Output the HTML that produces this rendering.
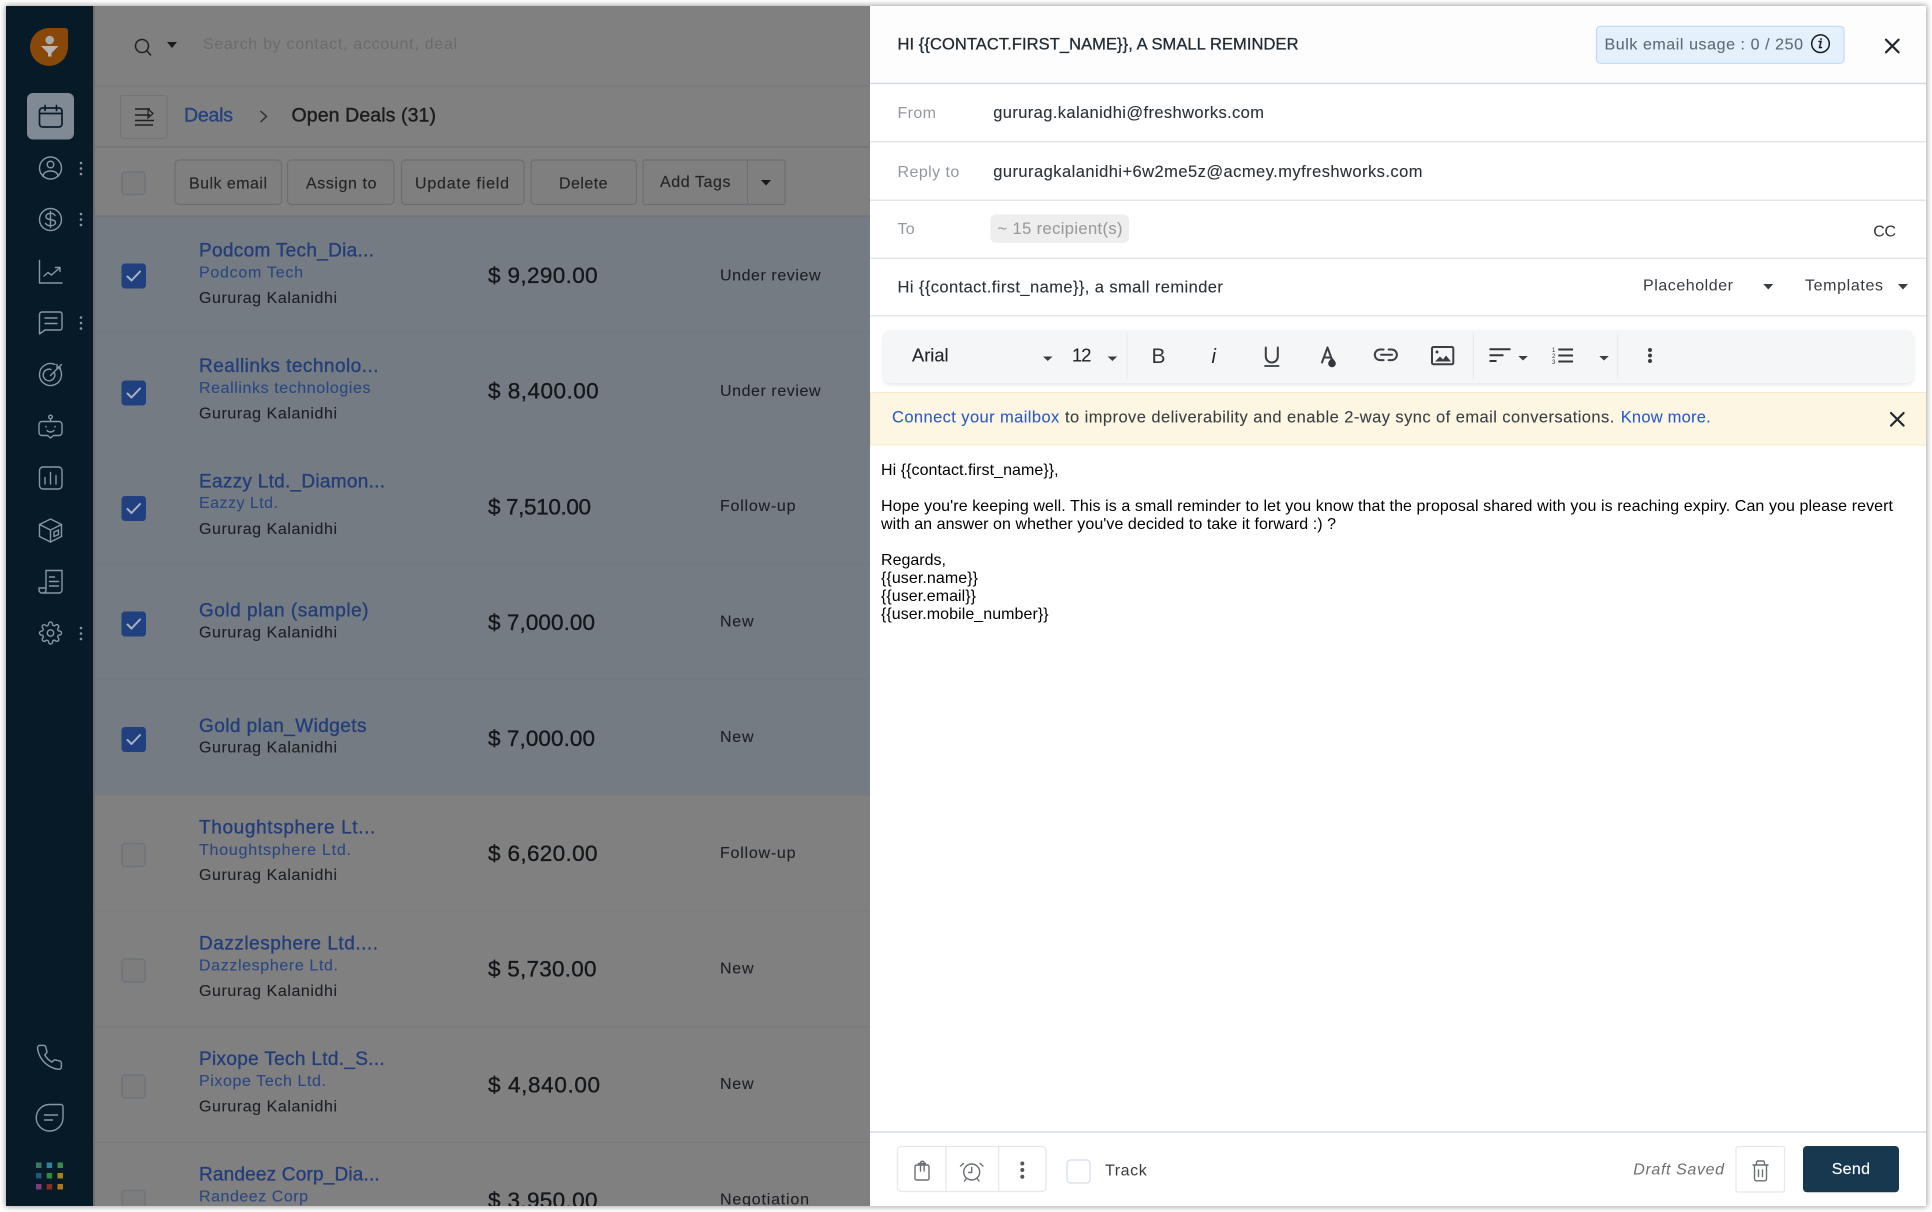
<!DOCTYPE html>
<html lang="en"><head><meta charset="utf-8"><title>Deals</title>
<style>
html,body{margin:0;padding:0;background:#fff;width:1932px;height:1212px;overflow:hidden}
svg{display:block}
text{font-family:"Liberation Sans",Arial,sans-serif;white-space:pre}
.t{font-size:19px;fill:#223d7a;stroke:#223d7a;stroke-width:.35}
.s{font-size:16px;fill:#2b4782;stroke:#2b4782;stroke-width:.1}
.o{font-size:16px;fill:#1c1f23;stroke:#1c1f23;stroke-width:.1}
.a{font-size:22.5px;fill:#14171a;stroke:#14171a;stroke-width:.35}
.st{font-size:16px;fill:#1c1f23;stroke:#1c1f23;stroke-width:.1}
.b{font-size:16px;fill:#232527;stroke:#232527;stroke-width:.15}
.l{font-size:16px;fill:#93989d}
.v{font-size:16.5px;fill:#2b3238;stroke:#2b3238;stroke-width:.12}
.ed{font-size:16px;fill:#000}
.ic{fill:none;stroke:#8797a4;stroke-width:1.4;stroke-linecap:round;stroke-linejoin:round}
.dk{fill:none;stroke:#3a3f44;stroke-width:2;stroke-linecap:round;stroke-linejoin:round}
.gy{fill:none;stroke:#6a6f74;stroke-width:1.4;stroke-linecap:round;stroke-linejoin:round}
.cb{fill:#21407f;stroke:#21407f}
.ub{fill:#7d7d7d;stroke:#6d747d;stroke-width:1.5}
.ck{fill:none;stroke:#a9b3c4;stroke-width:2;stroke-linecap:round;stroke-linejoin:round}
.dv{stroke:#7a7a7a;stroke-width:1}
.dvs{stroke:#70777e;stroke-width:1}
.hl{stroke:#e3e6e9;stroke-width:1.5}
</style></head><body>
<svg xmlns="http://www.w3.org/2000/svg" width="1932" height="1212" viewBox="0 0 1932 1212">
<defs>
<filter id="sh" x="-2%" y="-2%" width="104%" height="104%"><feGaussianBlur stdDeviation="3"/></filter>
<filter id="tb" x="-2%" y="-20%" width="104%" height="150%"><feDropShadow dx="0" dy="2" stdDeviation="2" flood-color="#000" flood-opacity=".1"/></filter>
<clipPath id="fr"><rect x="6" y="6" width="1920" height="1200"/></clipPath>
</defs>
<rect x="5" y="5" width="1922" height="1202" fill="#000" opacity=".35" filter="url(#sh)"/>
<g clip-path="url(#fr)">
<rect x="6" y="6" width="1920" height="1200" fill="#808080"/>

<!-- main left area -->
<rect x="93" y="216" width="777" height="579" fill="#747b82"/>
<line x1="93" y1="86" x2="870" y2="86" stroke="#767676"/>
<line x1="93" y1="147" x2="870" y2="147" stroke="#6e6e6e"/>
<line x1="93" y1="216" x2="870" y2="216" stroke="#707070"/>
<line class="dvs" x1="93" y1="332" x2="870" y2="332"/>
<line class="dvs" x1="93" y1="448" x2="870" y2="448"/>
<line class="dvs" x1="93" y1="563.5" x2="870" y2="563.5"/>
<line class="dvs" x1="93" y1="679" x2="870" y2="679"/>
<line class="dv" x1="93" y1="795" x2="870" y2="795"/>
<line class="dv" x1="93" y1="911" x2="870" y2="911"/>
<line class="dv" x1="93" y1="1027" x2="870" y2="1027"/>
<line class="dv" x1="93" y1="1142.5" x2="870" y2="1142.5"/>

<!-- search -->
<circle cx="142" cy="46" r="6.5" fill="none" stroke="#1f1f1f" stroke-width="1.5"/>
<line x1="147" y1="51" x2="151" y2="55.5" stroke="#1f1f1f" stroke-width="1.5"/>
<path d="M167 42h10l-5 6z" fill="#1a1a1a"/>
<text x="203" y="49" font-size="16" fill="#6b6b6b" textLength="254" lengthAdjust="spacing">Search by contact, account, deal</text>

<!-- breadcrumb -->
<rect x="120.5" y="95.5" width="46.5" height="43" rx="2" fill="#808080" stroke="#747474"/>
<path d="M135 109h15M135 115h15M135 120.500h19M135 125h18" stroke="#1f1f1f" stroke-width="1.4" fill="none"/>
<path d="M148 109l5 4.500l-5 4.500z" fill="none" stroke="#1f1f1f" stroke-width="1.2"/>
<text x="184" y="121.500" font-size="19.500" fill="#24437f" stroke="#24437f" stroke-width=".4" textLength="49" lengthAdjust="spacing">Deals</text>
<path d="M260.500 111l6 5.500l-6 5.500" fill="none" stroke="#2a2a2a" stroke-width="1.300"/>
<text x="291.500" y="121.500" font-size="19.500" fill="#1c1c1c" stroke="#1c1c1c" stroke-width=".4" textLength="144.500" lengthAdjust="spacing">Open Deals (31)</text>

<!-- actions -->
<rect class="ub" x="122" y="172" width="23" height="22.500" rx="3"/>
<g fill="#7f7f7f" stroke="#6b6f73" stroke-width="1.200">
<rect x="175" y="160" width="106.500" height="44.500" rx="4"/>
<rect x="287.500" y="160" width="106.500" height="44.500" rx="4"/>
<rect x="401.500" y="160" width="122.500" height="44.500" rx="4"/>
<rect x="531" y="160" width="105.500" height="44.500" rx="4"/>
<rect x="643" y="160" width="142" height="44.500" rx="2"/>
</g>
<line x1="747.500" y1="160" x2="747.500" y2="204.500" stroke="#6b6f73"/>
<path d="M761 180h10l-5 5.500z" fill="#1a1a1a"/>
<text class="b" x="189" y="188.500" textLength="78" lengthAdjust="spacing">Bulk email</text>
<text class="b" x="306" y="188.500" textLength="70.500" lengthAdjust="spacing">Assign to</text>
<text class="b" x="415" y="188.500" textLength="94" lengthAdjust="spacing">Update field</text>
<text class="b" x="559" y="188.500" textLength="48.500" lengthAdjust="spacing">Delete</text>
<text class="b" x="660" y="187" textLength="70.500" lengthAdjust="spacing">Add Tags</text>

<!-- checkboxes -->
<g>
<rect class="cb" x="122" y="264" width="23.500" height="24" rx="3"/><path class="ck" d="M127.500 276.500l4 4l8.500-9"/>
<rect class="cb" x="122" y="381" width="23.500" height="24" rx="3"/><path class="ck" d="M127.500 393.500l4 4l8.500-9"/>
<rect class="cb" x="122" y="496.500" width="23.500" height="24" rx="3"/><path class="ck" d="M127.500 509l4 4l8.500-9"/>
<rect class="cb" x="122" y="612" width="23.500" height="24" rx="3"/><path class="ck" d="M127.500 624.500l4 4l8.500-9"/>
<rect class="cb" x="122" y="727.500" width="23.500" height="24" rx="3"/><path class="ck" d="M127.500 740l4 4l8.500-9"/>
<rect class="ub" x="122" y="843.500" width="23" height="23" rx="3"/>
<rect class="ub" x="122" y="959" width="23" height="23" rx="3"/>
<rect class="ub" x="122" y="1075" width="23" height="23" rx="3"/>
<rect class="ub" x="122" y="1190.500" width="23" height="23" rx="3"/>
</g>

<!-- rows -->
<text class="t" x="199" y="256.500" textLength="175" lengthAdjust="spacing">Podcom Tech_Dia...</text>
<text class="s" x="199" y="277.500" textLength="104" lengthAdjust="spacing">Podcom Tech</text>
<text class="o" x="199" y="303" textLength="138" lengthAdjust="spacing">Gururag Kalanidhi</text>

<text class="t" x="199" y="372" textLength="179.500" lengthAdjust="spacing">Reallinks technolo...</text>
<text class="s" x="199" y="393" textLength="171.500" lengthAdjust="spacing">Reallinks technologies</text>
<text class="o" x="199" y="418.500" textLength="138" lengthAdjust="spacing">Gururag Kalanidhi</text>

<text class="t" x="199" y="487.500" textLength="186" lengthAdjust="spacing">Eazzy Ltd._Diamon...</text>
<text class="s" x="199" y="508" textLength="79" lengthAdjust="spacing">Eazzy Ltd.</text>
<text class="o" x="199" y="534" textLength="138" lengthAdjust="spacing">Gururag Kalanidhi</text>

<text class="t" x="199" y="616.500" textLength="169.500" lengthAdjust="spacing">Gold plan (sample)</text>
<text class="o" x="199" y="637.300" textLength="138" lengthAdjust="spacing">Gururag Kalanidhi</text>

<text class="t" x="199" y="732" textLength="167.500" lengthAdjust="spacing">Gold plan_Widgets</text>
<text class="o" x="199" y="752.700" textLength="138" lengthAdjust="spacing">Gururag Kalanidhi</text>

<text class="t" x="199" y="833.500" textLength="176.300" lengthAdjust="spacing">Thoughtsphere Lt...</text>
<text class="s" x="199" y="855" textLength="152" lengthAdjust="spacing">Thoughtsphere Ltd.</text>
<text class="o" x="199" y="880" textLength="138" lengthAdjust="spacing">Gururag Kalanidhi</text>

<text class="t" x="199" y="949.500" textLength="179" lengthAdjust="spacing">Dazzlesphere Ltd....</text>
<text class="s" x="199" y="970.700" textLength="139" lengthAdjust="spacing">Dazzlesphere Ltd.</text>
<text class="o" x="199" y="996" textLength="138" lengthAdjust="spacing">Gururag Kalanidhi</text>

<text class="t" x="199" y="1065" textLength="185.700" lengthAdjust="spacing">Pixope Tech Ltd._S...</text>
<text class="s" x="199" y="1086" textLength="127" lengthAdjust="spacing">Pixope Tech Ltd.</text>
<text class="o" x="199" y="1111.700" textLength="138" lengthAdjust="spacing">Gururag Kalanidhi</text>

<text class="t" x="199" y="1180.500" textLength="180.700" lengthAdjust="spacing">Randeez Corp_Dia...</text>
<text class="s" x="199" y="1201.700" textLength="109" lengthAdjust="spacing">Randeez Corp</text>

<!-- amounts -->
<text class="a" x="488" y="283" textLength="109.700" lengthAdjust="spacing">$ 9,290.00</text>
<text class="a" x="488" y="398.700" textLength="110.700" lengthAdjust="spacing">$ 8,400.00</text>
<text class="a" x="488" y="514.400" textLength="103" lengthAdjust="spacing">$ 7,510.00</text>
<text class="a" x="488" y="630" textLength="107" lengthAdjust="spacing">$ 7,000.00</text>
<text class="a" x="488" y="745.800" textLength="107" lengthAdjust="spacing">$ 7,000.00</text>
<text class="a" x="488" y="861" textLength="109.500" lengthAdjust="spacing">$ 6,620.00</text>
<text class="a" x="488" y="976.700" textLength="108.500" lengthAdjust="spacing">$ 5,730.00</text>
<text class="a" x="488" y="1092.500" textLength="112" lengthAdjust="spacing">$ 4,840.00</text>
<text class="a" x="488" y="1208" textLength="109.500" lengthAdjust="spacing">$ 3,950.00</text>

<!-- statuses -->
<text class="st" x="720" y="280.700" textLength="100.500" lengthAdjust="spacing">Under review</text>
<text class="st" x="720" y="396.200" textLength="100.500" lengthAdjust="spacing">Under review</text>
<text class="st" x="720" y="511" textLength="75.500" lengthAdjust="spacing">Follow-up</text>
<text class="st" x="720" y="626.500" textLength="33.500" lengthAdjust="spacing">New</text>
<text class="st" x="720" y="742.200" textLength="33.500" lengthAdjust="spacing">New</text>
<text class="st" x="720" y="858" textLength="75.500" lengthAdjust="spacing">Follow-up</text>
<text class="st" x="720" y="973.500" textLength="33.500" lengthAdjust="spacing">New</text>
<text class="st" x="720" y="1089.200" textLength="33.500" lengthAdjust="spacing">New</text>
<text class="st" x="720" y="1204.500" textLength="89" lengthAdjust="spacing">Negotiation</text>

<!-- sidebar -->
<rect x="93" y="6" width="2" height="1200" fill="#6f6f6f"/>
<rect x="6" y="6" width="87" height="1200" fill="#071a27"/>
<path d="M30 47a19 19 0 0 1 19-19h16a3 3 0 0 1 3 3v16a19 19 0 0 1-38 0z" fill="#87480a"/>
<circle cx="49.700" cy="40" r="4.300" fill="#a9a9a9"/>
<path d="M41 46h17.500l-7 7v3.500h-3.500v-3.500z" fill="#b4b4b4"/>
<rect x="27" y="93" width="47" height="46.500" rx="6" fill="#7f8a94"/>
<g fill="none" stroke="#0b1d2b" stroke-width="1.700" stroke-linecap="round" stroke-linejoin="round">
<rect x="39.500" y="108" width="22.500" height="19" rx="3"/>
<path d="M39.500 113.500h22.500M45 105.500v5M56.500 105.500v5"/>
</g>

<g class="ic">
<!-- contacts -->
<circle cx="50.500" cy="168" r="11"/><circle cx="50.500" cy="164.500" r="3.300"/><path d="M43 176.500c0-3.500 3.200-5.500 7.500-5.500s7.500 2 7.500 5.500"/>
<!-- deals -->
<circle cx="50.500" cy="219.500" r="11"/><path d="M55 215.500c-.8-1.500-2.500-2.200-4.500-2.200c-2.600 0-4.500 1.300-4.500 3.200c0 4.500 9.500 2 9.500 6c0 1.900-2 3.200-5 3.200c-2.200 0-4-.8-5-2.300M50.500 211.500v16"/>
<!-- chart -->
<path d="M39.500 260.500v22.500h22.500"/><path d="M44 276l4-3.500l3.500 2.500l8-7M55.500 267.500h4.500v4"/>
<!-- chat -->
<path d="M42 312h18a2 2 0 0 1 2 2v14a2 2 0 0 1-2 2H45l-5.500 4V314.500a2.500 2.500 0 0 1 2.500-2.500z"/><path d="M45 318h12M45 323.500h12"/>
<!-- target -->
<path d="M58.500 367a11 11 0 1 1-3.500-2.500"/><path d="M54.500 373a5.800 5.800 0 1 1-3.500-3.500"/><path d="M50.500 375.500l9-9M57 364.500v3.500h3.500M59.500 366.500l2-2"/>
<!-- bot -->
<circle cx="50.500" cy="417" r="1.800"/><path d="M50.500 419v2.500"/><path d="M42 421.500h17a3 3 0 0 1 3 3v8a3 3 0 0 1-3 3h-5.500l-3 2.500l-3-2.500H42a3 3 0 0 1-3-3v-8a3 3 0 0 1 3-3z"/><path d="M46 426.500v.5M55 426.500v.5M47 430.500c2 2 5 2 7 0"/>
<!-- reports -->
<rect x="39.500" y="467" width="22.500" height="22" rx="3.500"/><path d="M45 477.500v6.500M50.500 472.500v11.500M56 475.500v8.500"/>
<!-- box -->
<path d="M50.500 519l11 5.500v12l-11 5.500l-11-5.500v-12z"/><path d="M39.500 524.500l11 5.500l11-5.500M50.500 530v12"/><path d="M54 532l4.500-2v4.500l-4.500 2z"/>
<!-- doc -->
<path d="M62 570.500H46v19.500a3 3 0 0 1-3 3h16a3 3 0 0 0 3-3zM46 588h-7v2a3 3 0 0 0 3 3"/><path d="M49.500 577h5M49.500 581.500h9M49.500 586h9"/>
<!-- gear -->
<g transform="translate(38.500,621)"><circle cx="12" cy="12" r="3.200"/><path d="M19.400 15a1.650 1.650 0 0 0 .33 1.820l.06.06a2 2 0 0 1 0 2.830 2 2 0 0 1-2.830 0l-.06-.06a1.650 1.650 0 0 0-1.820-.33 1.650 1.650 0 0 0-1 1.510V21a2 2 0 0 1-2 2 2 2 0 0 1-2-2v-.09A1.650 1.650 0 0 0 9 19.400a1.650 1.650 0 0 0-1.820.33l-.06.06a2 2 0 0 1-2.830 0 2 2 0 0 1 0-2.830l.06-.06a1.650 1.650 0 0 0 .33-1.820 1.650 1.650 0 0 0-1.510-1H3a2 2 0 0 1-2-2 2 2 0 0 1 2-2h.09A1.650 1.650 0 0 0 4.600 9a1.650 1.650 0 0 0-.33-1.820l-.06-.06a2 2 0 0 1 0-2.830 2 2 0 0 1 2.830 0l.06.06a1.650 1.650 0 0 0 1.820.33H9a1.650 1.650 0 0 0 1-1.510V3a2 2 0 0 1 2-2 2 2 0 0 1 2 2v.09a1.650 1.650 0 0 0 1 1.510 1.650 1.650 0 0 0 1.820-.33l.06-.06a2 2 0 0 1 2.830 0 2 2 0 0 1 0 2.830l-.06.06a1.650 1.650 0 0 0-.33 1.820V9a1.650 1.650 0 0 0 1.510 1H21a2 2 0 0 1 2 2 2 2 0 0 1-2 2h-.09a1.650 1.650 0 0 0-1.510 1z"/></g>
<!-- phone -->
<path transform="translate(35,1043) scale(1.2)" stroke-width="1.200" d="M22 16.920v3a2 2 0 0 1-2.180 2 19.790 19.790 0 0 1-8.630-3.070 19.500 19.500 0 0 1-6-6 19.790 19.790 0 0 1-3.070-8.670A2 2 0 0 1 4.110 2h3a2 2 0 0 1 2 1.720 12.840 12.840 0 0 0 .7 2.810 2 2 0 0 1-.45 2.110L8.090 9.910a16 16 0 0 0 6 6l1.270-1.270a2 2 0 0 1 2.110-.45 12.840 12.840 0 0 0 2.810.7A2 2 0 0 1 22 16.920z"/>
<!-- freddy chat -->
<path d="M49.500 1104.500h11.500a2 2 0 0 1 2 2v11.500a13.200 13.200 0 0 1-13.500 13a13.200 13.200 0 0 1 0-26.500z"/><path d="M44.500 1115h13M44.500 1120h8"/>
</g>
<g fill="#8697a4"><circle cx="81" cy="163" r="1.300"/><circle cx="81" cy="168.500" r="1.300"/><circle cx="81" cy="174" r="1.300"/>
<circle cx="81" cy="214" r="1.300"/><circle cx="81" cy="219.500" r="1.300"/><circle cx="81" cy="225" r="1.300"/>
<circle cx="81" cy="317.500" r="1.300"/><circle cx="81" cy="323" r="1.300"/><circle cx="81" cy="328.500" r="1.300"/>
<circle cx="81" cy="628" r="1.300"/><circle cx="81" cy="633.500" r="1.300"/><circle cx="81" cy="639" r="1.300"/></g>
<g>
<rect x="36" y="1162.500" width="5.500" height="5.500" fill="#3b7a5e"/><rect x="46.700" y="1162.500" width="5.500" height="5.500" fill="#2f8496"/><rect x="57.500" y="1162.500" width="5.500" height="5.500" fill="#3c8a4a"/>
<rect x="36" y="1173" width="5.500" height="5.500" fill="#245479"/><rect x="46.700" y="1173" width="5.500" height="5.500" fill="#2f8a3d"/><rect x="57.500" y="1173" width="5.500" height="5.500" fill="#a8801c"/>
<rect x="36" y="1184" width="5.500" height="5.500" fill="#7d3f79"/><rect x="46.700" y="1184" width="5.500" height="5.500" fill="#8c2a24"/><rect x="57.500" y="1184" width="5.500" height="5.500" fill="#a8781a"/>
</g>

<!-- email panel -->
<rect x="870" y="6" width="1056" height="1200" fill="#fff"/>
<rect x="870" y="6" width="1056" height="77" fill="#fdfdfe"/>
<line x1="870" y1="83.500" x2="1926" y2="83.500" stroke="#d4dbe2" stroke-width="1.500"/>
<line class="hl" x1="870" y1="141.700" x2="1926" y2="141.700"/>
<line class="hl" x1="870" y1="200.300" x2="1926" y2="200.300"/>
<line class="hl" x1="870" y1="258.300" x2="1926" y2="258.300"/>
<line class="hl" x1="870" y1="315.700" x2="1926" y2="315.700"/>

<text x="897.500" y="49.500" font-size="16.500" fill="#1f2a33" stroke="#1f2a33" stroke-width=".3" textLength="401" lengthAdjust="spacing">HI {{CONTACT.FIRST_NAME}}, A SMALL REMINDER</text>
<rect x="1596.500" y="26.300" width="247.500" height="37" rx="4" fill="#e4f1fd" stroke="#bcdaf5" stroke-width="1.200"/>
<text x="1604.500" y="49.500" font-size="16" fill="#5f6a73" stroke="#5f6a73" stroke-width=".1" textLength="198.500" lengthAdjust="spacing">Bulk email usage : 0 / 250</text>
<circle cx="1820.500" cy="43.700" r="8.800" fill="none" stroke="#1a1a1a" stroke-width="1.500"/>
<path d="M1819 41.500h2l-1.500 6h2M1821 38.700v.8" fill="none" stroke="#1a1a1a" stroke-width="1.500" stroke-linecap="round"/>
<path d="M1886 39.700l12.600 12.600M1898.600 39.700l-12.600 12.600" stroke="#23282d" stroke-width="2.200" stroke-linecap="round"/>

<text class="l" x="897.500" y="118" textLength="38.500" lengthAdjust="spacing">From</text>
<text class="v" x="993.200" y="118" textLength="270.800" lengthAdjust="spacing">gururag.kalanidhi@freshworks.com</text>
<text class="l" x="897.500" y="177" textLength="61.800" lengthAdjust="spacing">Reply to</text>
<text class="v" x="993.200" y="177" textLength="429.300" lengthAdjust="spacing">gururagkalanidhi+6w2me5z@acmey.myfreshworks.com</text>
<text class="l" x="897.500" y="234" textLength="17.100" lengthAdjust="spacing">To</text>
<rect x="990.400" y="214.500" width="138.600" height="28.300" rx="5" fill="#eeeeee"/>
<text x="997.500" y="234" font-size="16.500" fill="#9b9b9b" stroke="#9b9b9b" stroke-width=".1" textLength="125" lengthAdjust="spacing">~ 15 recipient(s)</text>
<text x="1873.300" y="236.300" font-size="16" fill="#2f3337" textLength="22.700" lengthAdjust="spacing">CC</text>
<text class="v" x="897.500" y="292.500" fill="#23282d" textLength="325.400" lengthAdjust="spacing">Hi {{contact.first_name}}, a small reminder</text>
<text x="1643" y="290.700" font-size="16" fill="#36393d" textLength="90" lengthAdjust="spacing">Placeholder</text>
<path d="M1763.300 284h10l-5 5.500z" fill="#3a3f44"/>
<text x="1805" y="290.700" font-size="16" fill="#36393d" textLength="78" lengthAdjust="spacing">Templates</text>
<path d="M1898 284h10l-5 5.500z" fill="#3a3f44"/>

<!-- toolbar -->
<rect x="883.600" y="330" width="1029.700" height="52.700" rx="7" fill="#f5f6f8" filter="url(#tb)"/>
<text x="912" y="361.700" font-size="18.300" fill="#1f2226" stroke="#1f2226" stroke-width=".1" textLength="36.600" lengthAdjust="spacing">Arial</text>
<path d="M1043 356.500h9.500l-4.750 4.500z" fill="#3a3f44"/>
<text x="1072" y="361.700" font-size="18.300" fill="#1f2226" stroke="#1f2226" stroke-width=".1" textLength="19.400" lengthAdjust="spacing">12</text>
<path d="M1107.700 356.500h9.500l-4.750 4.500z" fill="#3a3f44"/>
<line x1="1127" y1="333" x2="1127" y2="379" stroke="#e6e8eb"/>
<text x="1151.500" y="363" font-size="21" fill="#33373b">B</text>
<text x="1211.500" y="363" font-size="20" font-style="italic" fill="#1f2226">i</text>
<path d="M1265.800 347.500v9a6 6 0 0 0 12 0v-9" class="dk" stroke-linecap="butt"/>
<line x1="1264.300" y1="366" x2="1279.300" y2="366" stroke="#3a3f44" stroke-width="1.800"/>
<path d="M1322 362.500l5.500-15l4 11M1324 357.500h6" class="dk" stroke-width="1.800"/>
<path d="M1332 357.500c2 2.500 3.800 4 3.800 6a3.800 3.800 0 0 1-7.600 0c0-2 1.800-3.500 3.800-6z" fill="#33373b"/>
<path d="M1383.600 349.500h-3.500a5.300 5.300 0 0 0 0 10.600h3.500M1388.600 349.500h3a5.300 5.300 0 0 1 0 10.600h-3M1381 354.800h11" class="dk"/>
<rect x="1432" y="347" width="21.300" height="17.300" rx="1.500" class="dk"/>
<circle cx="1437" cy="352" r="1.500" fill="#3a3f44"/>
<path d="M1435 361.500l5-5l3 3l3-4l5 6z" fill="#3a3f44"/>
<line x1="1473.500" y1="333" x2="1473.500" y2="379" stroke="#e6e8eb"/>
<path d="M1489.500 349.300h21M1489.500 355.300h14M1489.500 361h7" stroke="#33373b" stroke-width="2" fill="none"/>
<path d="M1518.300 356h9.500l-4.750 4.500z" fill="#3a3f44"/>
<path d="M1558.300 349.500h14.700M1558.300 355.500h14.700M1558.300 361.500h14.700" stroke="#33373b" stroke-width="2" fill="none"/>
<text x="1552" y="352" font-size="6" fill="#33373b">1</text>
<text x="1552" y="358" font-size="6" fill="#33373b">2</text>
<text x="1552" y="364" font-size="6" fill="#33373b">3</text>
<path d="M1599.300 356h9.500l-4.750 4.500z" fill="#3a3f44"/>
<line x1="1617.700" y1="333" x2="1617.700" y2="379" stroke="#e6e8eb"/>
<circle cx="1650" cy="350" r="2" fill="#3a3f44"/><circle cx="1650" cy="355.500" r="2" fill="#3a3f44"/><circle cx="1650" cy="361" r="2" fill="#3a3f44"/>

<!-- banner -->
<rect x="870.500" y="392.500" width="1056" height="52.500" fill="#fdf6e3" stroke="#fbe8c8"/>
<text x="892" y="422.500" font-size="16.500" fill="#2c5cc5" stroke="#2c5cc5" stroke-width=".1" textLength="167.300" lengthAdjust="spacing">Connect your mailbox</text>
<text x="1065" y="422.500" font-size="16.500" fill="#3a3f44" stroke="#3a3f44" stroke-width=".1" textLength="549.300" lengthAdjust="spacing">to improve deliverability and enable 2-way sync of email conversations.</text>
<text x="1620.700" y="422.500" font-size="16.500" fill="#2c5cc5" stroke="#2c5cc5" stroke-width=".1" textLength="90" lengthAdjust="spacing">Know more.</text>
<path d="M1891 413l12.600 12.600M1903.600 413l-12.600 12.600" stroke="#23282d" stroke-width="2.200" stroke-linecap="round"/>

<!-- body -->
<text class="ed" x="881" y="475" textLength="177.600" lengthAdjust="spacing">Hi {{contact.first_name}},</text>
<text class="ed" x="881" y="511" textLength="1012" lengthAdjust="spacing">Hope you're keeping well. This is a small reminder to let you know that the proposal shared with you is reaching expiry. Can you please revert</text>
<text class="ed" x="881" y="529" textLength="455" lengthAdjust="spacing">with an answer on whether you've decided to take it forward :) ?</text>
<text class="ed" x="881" y="565" textLength="65" lengthAdjust="spacing">Regards,</text>
<text class="ed" x="881" y="583" textLength="97" lengthAdjust="spacing">{{user.name}}</text>
<text class="ed" x="881" y="601" textLength="95" lengthAdjust="spacing">{{user.email}}</text>
<text class="ed" x="881" y="619" textLength="167.600" lengthAdjust="spacing">{{user.mobile_number}}</text>

<!-- footer -->
<line x1="870" y1="1132" x2="1926" y2="1132" stroke="#d4dbe2" stroke-width="1.500"/>
<rect x="897.500" y="1146.500" width="148.500" height="45" rx="4" fill="#fff" stroke="#e6e8ea" stroke-width="1.300"/>
<line x1="946" y1="1146.500" x2="946" y2="1191.500" stroke="#e6e8ea" stroke-width="1.300"/>
<line x1="998.700" y1="1146.500" x2="998.700" y2="1191.500" stroke="#e6e8ea" stroke-width="1.300"/>
<g class="gy">
<rect x="915" y="1165" width="14" height="15" rx="1.500"/>
<path d="M918.500 1165v-1.500h7v1.500"/>
<path d="M920.500 1171v-8a1.800 1.800 0 0 1 3.600 0v8"/>
<circle cx="971.700" cy="1172" r="8"/><path d="M971.700 1167.500v5h-3M963.500 1163.500l-3 2.500M980 1163.500l3 2.500M966 1179l-1.500 2M977.500 1179l1.500 2"/>
</g>
<circle cx="1022.300" cy="1163.500" r="2" fill="#555"/><circle cx="1022.300" cy="1170" r="2" fill="#555"/><circle cx="1022.300" cy="1176.700" r="2" fill="#555"/>
<rect x="1067" y="1160" width="23" height="23" rx="3.500" fill="#fff" stroke="#d5deea" stroke-width="1.300"/>
<text x="1105" y="1175.700" font-size="16" fill="#3b3b3b" textLength="41.700" lengthAdjust="spacing">Track</text>
<text x="1633.300" y="1174.300" font-size="16" font-style="italic" fill="#6e6e6e" textLength="90.700" lengthAdjust="spacing">Draft Saved</text>
<rect x="1736" y="1146.500" width="48.500" height="45.500" rx="2" fill="#fff" stroke="#e8e8e8" stroke-width="1.300"/>
<g class="gy">
<path d="M1753 1165h15M1756.500 1165v-2.500a1.500 1.500 0 0 1 1.500-1.500h5a1.500 1.500 0 0 1 1.500 1.500v2.500"/>
<path d="M1754.500 1165.500v13.500a1.800 1.800 0 0 0 1.800 1.800h8.400a1.800 1.800 0 0 0 1.800-1.800v-13.500"/>
<path d="M1758.500 1170v6.500M1762.500 1170v6.500"/>
</g>
<rect x="1803" y="1146" width="96" height="46.300" rx="4" fill="#183850"/>
<text x="1831.700" y="1174" font-size="16" fill="#fff" stroke="#fff" stroke-width=".15" textLength="38.300" lengthAdjust="spacing">Send</text>
</g>
</svg>
</body></html>
